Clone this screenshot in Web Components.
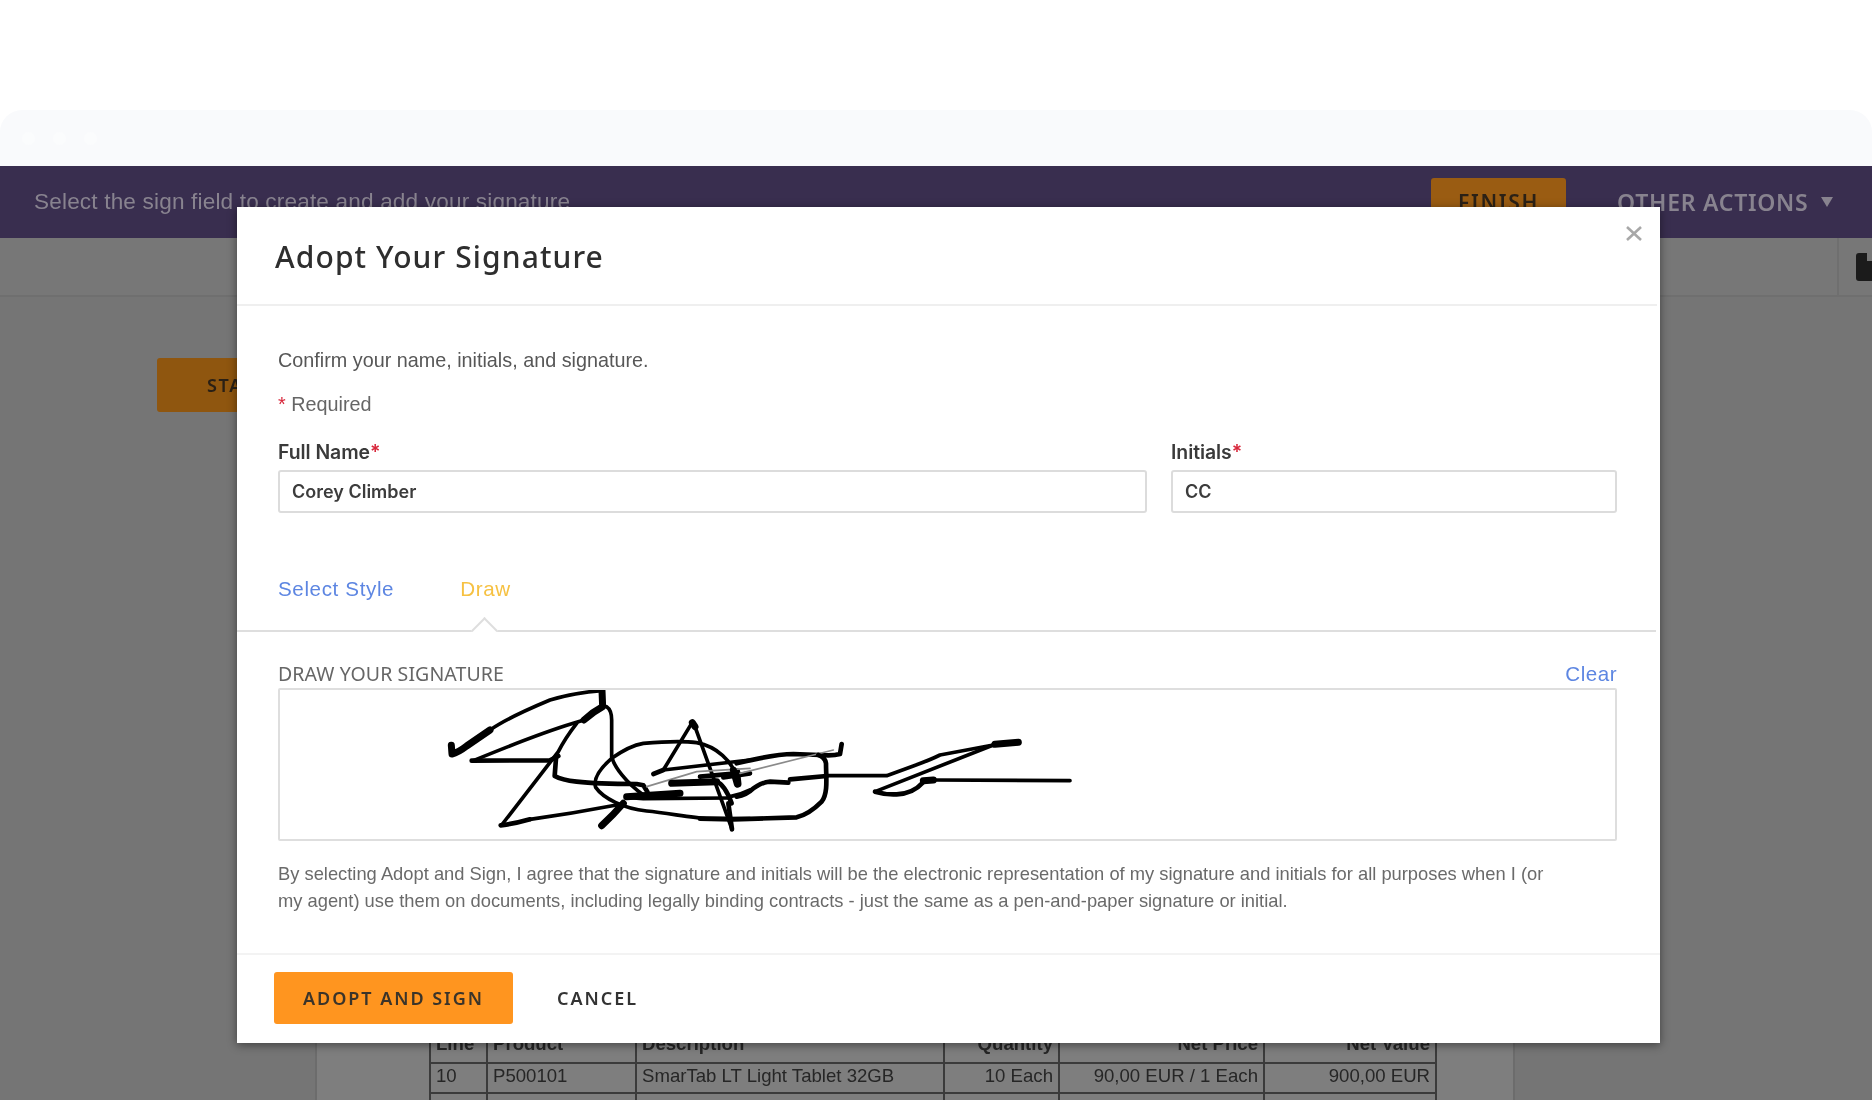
<!DOCTYPE html>
<html>
<head>
<meta charset="utf-8">
<title>Adopt Your Signature</title>
<style>
html, body { margin: 0; height: 1100px; overflow: hidden; background: #fff; }
</style>
</head>
<body>
<sign-app>
    <action-bar slot="backdrop">Select the sign field to create and add your signature</action-bar>
    <adopt-dialog slot="dialog"></adopt-dialog>
</sign-app>

<script>
(function() {
    /*
     *     Backdrop pieces
     * ---------------------------
     */
    class ActionBar extends HTMLElement {
        constructor() {
            super();
            this.attachShadow({mode: 'open'});
            this.shadowRoot.innerHTML = `
<style>
:host { display: flex; align-items: center; height: 72px; padding: 0 0 0 34px; background: #392e4f; color: #88838f; font: 22.6px "Liberation Sans", sans-serif; box-sizing: border-box; }
.msg { flex: 1; letter-spacing: .16px; }
.finish { display: flex; align-items: center; justify-content: center; width: 135px; height: 48px; margin-top: -1px; background: #9a5c12; color: #2b2116; border-radius: 3px; font: 600 21px "Noto Sans", sans-serif; letter-spacing: 1.7px; }
.other { display: flex; align-items: center; margin-left: 51px; width: 255px; font: 600 23px "Noto Sans", sans-serif; letter-spacing: .75px; }
.caret { margin-left: 12px; width: 0; height: 0; border: 6px solid transparent; border-top: 10px solid #88838f; border-bottom: 0; }
</style>
<div class="msg"><slot></slot></div>
<div class="finish">FINISH</div>
<div class="other">OTHER ACTIONS<span class="caret"></span></div>`;
        }
    }

    class DocTable extends HTMLElement {
        constructor() {
            super();
            this.attachShadow({mode: 'open'});
            this.shadowRoot.innerHTML = `
<style>
:host { display: block; width: 1006px; font: 18.6px "Liberation Sans", sans-serif; color: #262626; }
table { border-collapse: collapse; table-layout: fixed; width: 100%; }
th, td { border: 2px solid #3b3b3b; padding: 0 5px 4px; height: 24px; text-align: left; font-weight: normal; white-space: nowrap; }
th { font-weight: bold; height: 25px; padding-bottom: 6px; }
.r { text-align: right; }
</style>
<table>
<colgroup><col style="width:57px"><col style="width:149px"><col style="width:308px"><col style="width:115px"><col style="width:205px"><col style="width:172px"></colgroup>
<tr><th>Line</th><th>Product</th><th>Description</th><th class="r">Quantity</th><th class="r">Net Price</th><th class="r">Net Value</th></tr>
<tr><td>10</td><td>P500101</td><td>SmarTab LT Light Tablet 32GB</td><td class="r">10 Each</td><td class="r">90,00 EUR / 1 Each</td><td class="r">900,00 EUR</td></tr>
<tr><td>&nbsp;</td><td></td><td></td><td></td><td></td><td></td></tr>
</table>`;
        }
    }

    /*
     *     Form pieces
     * ---------------------------
     */
    class TextField extends HTMLElement {
        constructor() {
            super();
            this.attachShadow({mode: 'open'});
            this.shadowRoot.innerHTML = `
<style>
:host { display: block; }
.label { font: 600 19.4px/24px Inter, sans-serif; color: #3a3a3a; letter-spacing: -.05px; }
.label b { color: #d8283c; font-weight: 600; }
.box { margin-top: 6px; height: 43px; box-sizing: border-box; padding: 0 12px; display: flex; align-items: center; border: 2px solid #dcdcdc; border-radius: 3px; font: 600 18px Inter, sans-serif; color: #3c3c3c; }
</style>
<div class="label"><slot></slot><b>*</b></div>
<div class="box"><slot name="value"></slot></div>`;
        }
    }

    class SignTab extends HTMLElement {
        constructor() {
            super();
            this.attachShadow({mode: 'open'});
            this.shadowRoot.innerHTML = `
<style>
:host { display: block; position: relative; font: 20.6px/24px "Liberation Sans", sans-serif; letter-spacing: .62px; color: #5d86e2; }
:host([active]) { color: #f6c142; }
:host([active])::after { content: ""; position: absolute; left: 50%; bottom: -39px; width: 19px; height: 19px; margin-left: -10px; box-sizing: border-box; background: #fff; border-left: 2px solid #dedede; border-top: 2px solid #dedede; transform: rotate(45deg); }
</style>
<slot></slot>`;
        }
    }

    class SignTabs extends HTMLElement {
        constructor() {
            super();
            this.attachShadow({mode: 'open'});
            this.shadowRoot.innerHTML = `
<style>
:host { display: flex; gap: 66px; margin: 64px -39px 0 -41px; padding: 0 0 29px 41px; border-bottom: 2px solid #dedede; }
</style>
<slot></slot>`;
        }
    }

    class SignaturePad extends HTMLElement {
        constructor() {
            super();
            this.attachShadow({mode: 'open'});
            this.shadowRoot.innerHTML = `
<style>
:host { display: block; margin-top: 30px; }
.head { display: flex; justify-content: space-between; font: 19.5px/24px "Noto Sans", sans-serif; color: #666; }
.title { letter-spacing: .1px; }
.clear { color: #5d86e2; font: 20.6px/24px "Liberation Sans", sans-serif; letter-spacing: .5px; }
.pad { margin-top: 2px; height: 153px; box-sizing: border-box; border: 2px solid #dedede; border-radius: 2px; }
svg { display: block; width: 100%; height: 100%; }
path { fill: none; stroke: #000; stroke-linecap: round; stroke-linejoin: round; }
.t { stroke-width: 11; }
.m { stroke-width: 14; }
.b { stroke-width: 21; }
.g { stroke: #8a8a8a; stroke-width: 5; }
</style>
<div class="head"><span class="title"><slot name="title"></slot></span><span class="clear"><slot name="action"></slot></span></div>
<div class="pad">
<svg viewBox="280 690 1335 149" preserveAspectRatio="none">
  <g transform="translate(430 680) scale(.33333)">
    <path class="b" d="M64 196 L66 222 Q84 218 110 198 L180 150"/>
    <path class="t" d="M180 150 C230 115 300 85 360 60 C420 42 470 35 515 32"/>
    <path class="b" d="M516 32 L518 80 Q490 95 462 120"/>
    <path class="t" d="M462 120 L430 130 C330 160 220 205 130 242"/>
    <path class="m" d="M125 242 L360 241 L385 228"/>
    <path class="m" d="M378 235 L374 288 Q395 300 440 305 C500 312 560 312 620 312 L640 316 L652 335"/>
    <path class="t" d="M440 130 Q405 175 385 215 L215 435"/>
    <path class="m" d="M212 436 Q260 430 300 418"/>
    <path class="t" d="M300 418 Q430 400 560 375"/>
    <path class="b" d="M580 370 Q550 405 515 437"/>
    <path class="b" d="M590 350 L750 340"/>
    <path class="t" d="M590 352 L640 356 L900 354"/>
    <path class="t" d="M530 80 Q545 90 545 120 L545 230 C552 260 590 310 640 345"/>
    <path class="t" d="M545 235 C505 270 490 300 497 322 C520 355 580 385 650 393 C720 400 790 415 830 415 L960 416"/>
    <path class="t" d="M545 235 C580 210 610 195 640 190 C700 185 760 183 800 188 C860 200 905 240 925 300"/>
    <path class="b" d="M920 275 L924 312"/>
    <path class="m" d="M670 282 L700 270"/>
    <path class="t" d="M700 270 L785 130"/>
    <path class="b" d="M787 128 L795 140"/>
    <path class="t" d="M795 140 L905 445"/>
    <path class="m" d="M895 370 L906 448"/>
    <path class="g" d="M650 320 L800 275 L960 265"/>
    <path class="t" d="M700 270 L960 240"/>
    <path class="b" d="M725 310 L860 305"/>
    <path class="m" d="M860 305 Q885 315 905 370"/>
    <path class="m" d="M880 292 L960 280"/>
    <path class="t" d="M900 350 Q930 345 960 330"/>
  </g>
  <g transform="translate(700 680) scale(.33333)">
    <path class="m" d="M110 250 C160 238 230 222 280 222 L360 225 Q400 228 420 222 L425 192"/>
    <path class="g" d="M120 280 L400 210"/>
    <path class="m" d="M0 416 L100 418 L290 412 C320 405 345 385 365 365 C385 340 378 290 378 250 Q375 232 355 225"/>
    <path class="m" d="M110 350 Q140 345 160 325 C180 312 195 305 210 305 L265 308"/>
    <path class="m" d="M270 298 L380 288"/>
    <path class="t" d="M380 287 L560 287 L640 258 Q690 240 720 225 L880 195"/>
    <path class="b" d="M885 193 L955 187"/>
    <path class="t" d="M880 195 L525 335"/>
    <path class="m" d="M525 335 Q560 345 590 343 Q640 340 668 308"/>
    <path class="b" d="M670 302 L700 300"/>
    <path class="t" d="M700 300 L1110 302"/>
    <path class="b" d="M100 270 L112 312"/>
    <path class="m" d="M0 290 L110 280"/>
  </g>
</svg>
</div>`;
        }
    }

    class SignButton extends HTMLElement {
        constructor() {
            super();
            this.attachShadow({mode: 'open'});
            this.shadowRoot.innerHTML = `
<style>
:host { display: flex; align-items: center; justify-content: center; box-sizing: border-box; height: 52px; border-radius: 3px; font: 600 18px "Noto Sans", sans-serif; letter-spacing: 1.95px; color: #333; }
:host([primary]) { background: #ff951f; color: #3b342a; width: 239px; }
</style>
<slot></slot>`;
        }
    }

    /*
     *     Dialog
     * ---------------------------
     */
    class AdoptDialog extends HTMLElement {
        constructor() {
            super();
            this.attachShadow({mode: 'open'});
            this.shadowRoot.innerHTML = `
<style>
:host { display: flex; flex-direction: column; position: absolute; left: 237px; top: 207px; width: 1423px; height: 836px; background: #fff; box-shadow: 0 2px 9px rgba(0,0,0,.45); font-family: "Liberation Sans", sans-serif; }
header { flex: none; height: 96px; padding: 1px 0 0 38px; margin-right: 3px; border-bottom: 2px solid #efefef; display: flex; align-items: center; }
h1 { margin: 0; font: 500 30px "Noto Sans", sans-serif; letter-spacing: 1.1px; color: #2e2e2e; }
.close { position: absolute; right: 18px; top: 19px; width: 16px; height: 15px; }
.close line { stroke: #a8a8a8; stroke-width: 2.6; }
main { flex: 1; padding: 42px 43px 0 41px; }
p { margin: 0; }
.intro { font-size: 19.8px; line-height: 24px; color: #575757; }
.req { margin-top: 20px; font-size: 19.8px; line-height: 24px; color: #666; }
.req b { color: #d8283c; font-weight: normal; }
.fields { display: grid; grid-template-columns: 869px 446px; column-gap: 24px; margin-top: 24px; }
.legal { margin-top: 19px; font-size: 18.34px; line-height: 27px; color: #6a6a6a; width: 1280px; }
footer { flex: none; height: 90px; box-sizing: border-box; border-top: 2px solid #f3f3f3; padding: 17px 0 0 37px; display: flex; align-items: flex-start; gap: 44px; }
</style>
<header><h1>Adopt Your Signature</h1>
<svg class="close" viewBox="0 0 16 15"><line x1="1" y1="1" x2="15" y2="14"/><line x1="15" y1="1" x2="1" y2="14"/></svg></header>
<main>
<p class="intro">Confirm your name, initials, and signature.</p>
<p class="req"><b>*</b> Required</p>
<div class="fields">
<text-field>Full Name<span slot="value">Corey Climber</span></text-field>
<text-field>Initials<span slot="value">CC</span></text-field>
</div>
<sign-tabs><sign-tab>Select Style</sign-tab><sign-tab active>Draw</sign-tab></sign-tabs>
<signature-pad><span slot="title">DRAW YOUR SIGNATURE</span><span slot="action">Clear</span></signature-pad>
<p class="legal">By selecting Adopt and Sign, I agree that the signature and initials will be the electronic representation of my signature and initials for all purposes when I (or my agent) use them on documents, including legally binding contracts - just the same as a pen-and-paper signature or initial.</p>
</main>
<footer><sign-button primary>ADOPT AND SIGN</sign-button><sign-button>CANCEL</sign-button></footer>`;
        }
    }

    /*
     *     Page shell
     * ---------------------------
     */
    class SignApp extends HTMLElement {
        constructor() {
            super();
            this.attachShadow({mode: 'open'});
            this.shadowRoot.innerHTML = `
<style>
:host { display: flex; flex-direction: column; position: relative; height: 1100px; padding-top: 110px; box-sizing: border-box; overflow: hidden; filter: blur(.45px); background: #fff; }
.chrome { flex: none; height: 56px; box-sizing: border-box; background: #f9fafc; border-radius: 22px 22px 0 0; display: flex; align-items: center; gap: 18px; padding-left: 22px; }
.chrome i { width: 13px; height: 13px; border-radius: 50%; background: #fbfcfd; }
.tools { flex: none; height: 59px; box-sizing: border-box; background: #777; border-bottom: 2px solid #6f6f6f; display: flex; justify-content: flex-end; }
.save { width: 35px; border-left: 2px solid #6f6f6f; padding: 15px 0 0 17px; box-sizing: border-box; overflow: hidden; }
.save svg { display: block; width: 26px; height: 28px; }
.work { flex: 1; background: #757575; display: flex; align-items: flex-start; padding-left: 157px; min-height: 0; }
.start { flex: none; width: 150px; height: 54px; margin-top: 61px; margin-right: 8px; background: #8f560f; border-radius: 3px; color: #2a2015; font: 600 18px/54px "Noto Sans", sans-serif; letter-spacing: 1.7px; box-sizing: border-box; padding-left: 50px; }
.doc { flex: none; width: 1200px; height: 100%; box-sizing: border-box; background: #7e7e7e; border-left: 2px solid #6c6c6c; border-right: 2px solid #6c6c6c; padding: 732px 0 0 112px; }
</style>
<div class="chrome"><i></i><i></i><i></i></div>
<slot name="backdrop"></slot>
<div class="tools"><div class="save"><svg viewBox="0 0 26 28"><path d="M3 0H11V8H19V0H20L26 6V25A3 3 0 0 1 23 28H3A3 3 0 0 1 0 25V3A3 3 0 0 1 3 0Z" fill="#1b1b1b"/></svg></div></div>
<div class="work"><div class="start">START</div><div class="doc"><doc-table></doc-table></div></div>
<slot name="dialog"></slot>`;
        }
    }

    customElements.define('action-bar', ActionBar);
    customElements.define('doc-table', DocTable);
    customElements.define('text-field', TextField);
    customElements.define('sign-tab', SignTab);
    customElements.define('sign-tabs', SignTabs);
    customElements.define('signature-pad', SignaturePad);
    customElements.define('sign-button', SignButton);
    customElements.define('adopt-dialog', AdoptDialog);
    customElements.define('sign-app', SignApp);
})();
</script>
</body>
</html>
